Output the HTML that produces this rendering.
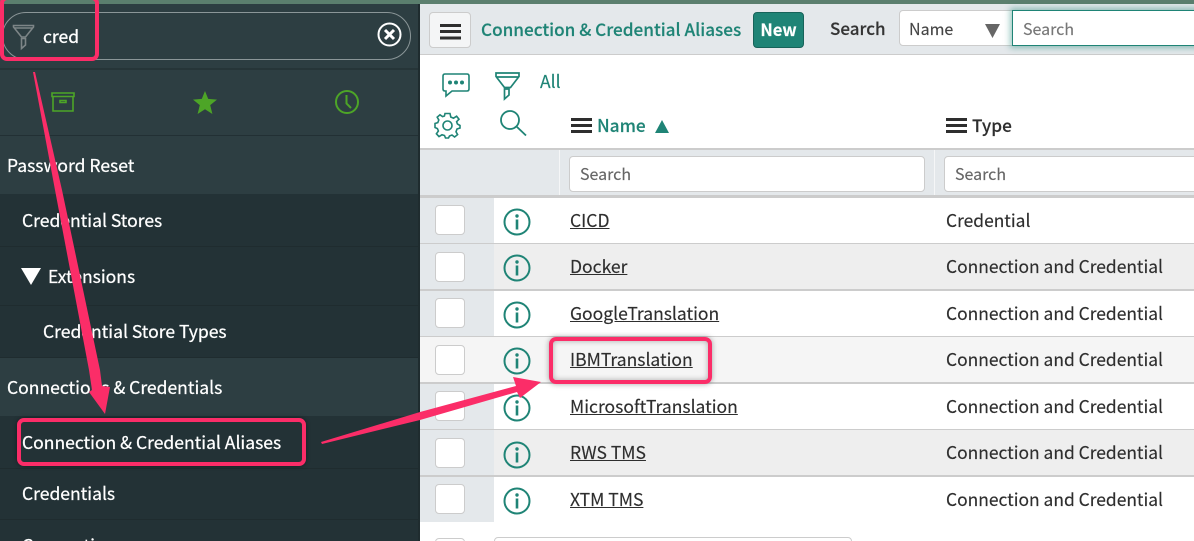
<!DOCTYPE html>
<html><head><meta charset="utf-8">
<style>
html,body{margin:0;padding:0;background:#fff}
#p{position:relative;width:1194px;height:541px;overflow:hidden;background:#fff;font-family:"Noto Sans CJK SC","Liberation Sans",sans-serif;font-size:17.5px;color:#2e2e2e;-webkit-text-stroke:.15px currentColor}
#p div,#p span.a,#p a{position:absolute;white-space:nowrap}
.b{left:0;width:420px}
.s{color:#fff;line-height:26px;height:26px;-webkit-text-stroke:.25px #fff}
.r{left:494px;width:700px;height:46px}
.l{left:420px;width:74px;background:#e4e8eb}
.cb{left:435px;width:30px;height:30px;background:#fff;border:1px solid #ccc;border-radius:4px;box-sizing:border-box}
.n{left:570px;line-height:26px;height:26px;color:#2e2e2e;text-decoration:underline}
.t{left:946px;line-height:26px;height:26px;color:#2e2e2e;font-size:17.4px}
.in{background:#fff;border:1px solid #ccc;border-radius:4px;box-sizing:border-box;height:36px;color:#666;line-height:32px;padding-left:10px;font-size:16px}
svg{position:absolute;overflow:visible}
</style></head><body><div id="p">
<div style="left:0;top:0;width:1194px;height:4px;background:#5b7f6e"></div>

<!-- sidebar -->
<div style="left:0;top:4px;width:420px;height:537px;background:#2d3e42"></div>
<div class="b" style="top:68px;height:2px;background:#263538"></div>
<div class="b" style="top:135px;height:1px;background:#223034"></div>
<div class="b" style="top:194px;height:164px;background:#233236"></div>
<div class="b" style="top:246px;height:1px;background:#1f2c2f"></div>
<div class="b" style="top:305px;height:1px;background:#1f2c2f"></div>
<div class="b" style="top:357px;height:1px;background:#1f2c2f"></div>
<div class="b" style="top:416px;height:125px;background:#233236"></div>
<div class="b" style="top:468px;height:1px;background:#1f2c2f"></div>
<div class="b" style="top:519px;height:1px;background:#1f2c2f"></div>
<div style="left:418px;top:4px;width:2px;height:537px;background:#1f2c2f"></div>

<div style="left:2px;top:12px;width:409px;height:48px;border:1px solid #8b9698;border-radius:24px;box-sizing:border-box"></div>
<svg style="left:12px;top:24px" width="24" height="26" viewBox="0 0 24 26" fill="none" stroke="#7d8587" stroke-width="1.6"><path d="M1.5 1.5H21.5V3L13.5 13H9.5L1.5 3Z M2 4H21"/><path d="M9.5 14.5H13.5V21L9.5 24.5Z"/></svg>
<div class="s" style="left:43px;top:24px;font-size:17.5px;-webkit-text-stroke:.35px #fff">cred</div>
<svg style="left:377px;top:22px" width="25" height="25" viewBox="0 0 25 25" fill="none" stroke="#fff"><circle cx="12.5" cy="12.5" r="11" stroke-width="2"/><path d="M8 8L17 17M17 8L8 17" stroke-width="3"/></svg>

<svg style="left:51px;top:92px" width="24" height="20" viewBox="0 0 24 20" fill="none" stroke="#4da527" stroke-width="1.6"><path d="M1 1H23V4.5H1Z M2 4.5V19H22V4.5 M9 8.5H15V10.5H9Z"/></svg>
<svg style="left:193px;top:91px" width="24" height="23" viewBox="0 0 24 23" fill="#4da527"><path d="M12 0L15.2 7.9L24 8.6L17.2 14.1L19.4 23L12 18.2L4.6 23L6.8 14.1L0 8.6L8.8 7.9Z"/></svg>
<svg style="left:335px;top:90px" width="25" height="24" viewBox="0 0 25 24" fill="none" stroke="#4da527" stroke-width="2"><circle cx="12" cy="12" r="11"/><path d="M11.5 5V13.5L16 18"/></svg>

<div class="s" style="left:7px;top:153px">Password Reset</div>
<div class="s" style="left:22px;top:208px">Credential Stores</div>
<svg style="left:21px;top:268px" width="20" height="17"><path d="M0 0H20L10 17Z" fill="#fff"/></svg>
<div class="s" style="left:48px;top:264px">Extensions</div>
<div class="s" style="left:43px;top:319px">Credential Store Types</div>
<div class="s" style="left:7px;top:375px">Connections &amp; Credentials</div>
<div class="s" style="left:22px;top:430px">Connection &amp; Credential Aliases</div>
<div class="s" style="left:22px;top:481px">Credentials</div>
<div class="s" style="left:22px;top:533px">Connections</div>

<!-- topbar -->
<div style="left:420px;top:4px;width:774px;height:50px;background:#e4e8eb"></div>
<div style="left:420px;top:54px;width:774px;height:1px;background:#ccc"></div>
<div style="left:429px;top:12px;width:42px;height:36px;background:#f4f5f6;border:1px solid #ccc;border-radius:4px;box-sizing:border-box"></div>
<svg style="left:440px;top:24px" width="21" height="16"><path d="M0 1.5H21M0 7.5H21M0 14H21" stroke="#2e2e2e" stroke-width="3"/></svg>
<div style="left:481px;top:17px;line-height:24px;height:24px;color:#1f8476;font-weight:500;font-size:17.15px">Connection &amp; Credential Aliases</div>
<div style="left:753px;top:12px;width:51px;height:36px;background:#1f8476;border:1px solid #17635a;border-radius:4px;box-sizing:border-box;color:#fff;font-weight:700;text-align:center;line-height:33px;font-size:16.6px">New</div>
<div style="left:830px;top:16px;line-height:24px;height:24px;color:#343434;font-weight:500;font-size:17px">Search</div>
<div style="left:899px;top:10px;width:125px;height:36px;background:#fff;border:1px solid #ccc;border-radius:4px;box-sizing:border-box;color:#444;line-height:34px;padding-left:9px;font-size:16px">Name</div>
<svg style="left:985px;top:24px" width="15" height="14"><path d="M0 0H15L7.5 14Z" fill="#666"/></svg>
<div style="left:1012px;top:10px;width:190px;height:36px;background:#fff;border:1px solid #1f8476;box-sizing:border-box;box-shadow:0 0 6px 2px rgba(31,132,118,.45);color:#777;line-height:34px;padding-left:10px;font-size:16px">Search</div>

<!-- list tools -->
<svg style="left:442px;top:73px" width="28" height="25" viewBox="0 0 28 25" fill="none" stroke="#1f8476" stroke-width="1.6"><path d="M3 1H25Q27 1 27 3V16Q27 18 25 18H10L4 23V18H3Q1 18 1 16V3Q1 1 3 1Z"/><g fill="#1f8476" stroke="none"><circle cx="8" cy="9.5" r="2"/><circle cx="14" cy="9.5" r="2"/><circle cx="20" cy="9.5" r="2"/></g></svg>
<svg style="left:495px;top:72px" width="25" height="28" viewBox="0 0 25 28" fill="none" stroke="#1f8476" stroke-width="1.7"><path d="M1 1H24V4.5L15.5 15.5H9.5L1 4.5Z M1.5 5H23.5"/><path d="M9.5 17H14V23L9.5 27Z"/></svg>
<div style="left:540px;top:70px;line-height:24px;height:24px;color:#1f8476">All</div>
<svg style="left:434px;top:112px" width="27" height="27" viewBox="0 0 27 27" fill="none" stroke="#1f8476" stroke-width="1.6"><circle cx="13.5" cy="13.5" r="4.5"/><path d="M11 1.5H16L16.8 5L19.5 6.2L22.6 4.2L25 7.2L22.6 9.7L23.4 12L26 13.5V16L23 17L22 19.8L23.6 22.6L20.6 25L18 23L15.5 24L14.5 26H11.5L10.5 23.5L8 22.8L5 24.6L2.4 21.8L4.4 19L3.4 16.6L1 15.5V11.5L3.8 10.6L4.8 8L3.2 5.2L6 2.8L8.6 4.6L10.4 4Z"/></svg>
<svg style="left:500px;top:110px" width="27" height="27" viewBox="0 0 27 27" fill="none" stroke="#1f8476" stroke-width="1.8"><circle cx="10" cy="10" r="9"/><path d="M16.5 16.5L26 25.5"/></svg>

<svg style="left:571px;top:118px" width="21" height="15"><path d="M0 1.5H21M0 7.5H21M0 13.5H21" stroke="#2e2e2e" stroke-width="3"/></svg>
<div style="left:597px;top:113px;line-height:24px;height:24px;color:#1f8476;font-weight:500;font-size:17.3px">Name</div>
<svg style="left:655px;top:120px" width="14" height="13"><path d="M0 13H14L7 0Z" fill="#1f8476"/></svg>
<svg style="left:946px;top:118px" width="21" height="15"><path d="M0 1.5H21M0 7.5H21M0 13.5H21" stroke="#2e2e2e" stroke-width="3"/></svg>
<div style="left:972px;top:113px;line-height:24px;height:24px;color:#2e2e2e;font-weight:500;font-size:17.2px">Type</div>

<!-- filter row -->
<div style="left:420px;top:148px;width:774px;height:2px;background:#ccc"></div>
<div style="left:420px;top:150px;width:774px;height:45px;background:#e4e8eb"></div>
<div style="left:559px;top:150px;width:1px;height:45px;background:#f5f6f7"></div>
<div style="left:934px;top:150px;width:1px;height:45px;background:#f5f6f7"></div>
<div class="in" style="left:569px;top:156px;width:356px">Search</div>
<div class="in" style="left:944px;top:156px;width:260px">Search</div>
<div style="left:420px;top:195px;width:774px;height:3px;background:#ccc"></div>

<!-- rows -->
<div class="l" style="top:198px;height:324px"></div>
<div class="r" style="top:244px;height:46px;background:#eee"></div>
<div class="r" style="top:337px;height:46px;background:#f5f5f5"></div>
<div class="l" style="top:337px;height:46px;background:#f5f5f5"></div>
<div class="r" style="top:430px;height:46px;background:#eee"></div>
<div style="left:420px;top:243px;width:774px;height:1px;background:#ccc"></div>
<div style="left:420px;top:289px;width:774px;height:2px;background:#ccc"></div>
<div style="left:420px;top:336px;width:774px;height:1px;background:#ccc"></div>
<div style="left:420px;top:382px;width:774px;height:2px;background:#ccc"></div>
<div style="left:420px;top:429px;width:774px;height:1px;background:#ccc"></div>
<div style="left:420px;top:475px;width:774px;height:2px;background:#ccc"></div>

<div class="cb" style="top:205px"></div>
<div class="cb" style="top:252px"></div>
<div class="cb" style="top:298px"></div>
<div class="cb" style="top:345px"></div>
<div class="cb" style="top:391px"></div>
<div class="cb" style="top:438px"></div>
<div class="cb" style="top:484px"></div>

<svg width="0" height="0"><defs><g id="i"><circle cx="14" cy="14" r="12.5" fill="none" stroke="#1f8476" stroke-width="2"/><circle cx="14" cy="8" r="1.7" fill="#1f8476"/><rect x="12.7" y="11.5" width="2.6" height="10" fill="#1f8476"/></g></defs></svg>
<svg style="left:503px;top:208px" width="28" height="28"><use href="#i"/></svg>
<svg style="left:503px;top:254px" width="28" height="28"><use href="#i"/></svg>
<svg style="left:503px;top:301px" width="28" height="28"><use href="#i"/></svg>
<svg style="left:503px;top:347px" width="28" height="28"><use href="#i"/></svg>
<svg style="left:503px;top:394px" width="28" height="28"><use href="#i"/></svg>
<svg style="left:503px;top:441px" width="28" height="28"><use href="#i"/></svg>
<svg style="left:503px;top:487px" width="28" height="28"><use href="#i"/></svg>

<div class="n" style="top:208px">CICD</div><div class="t" style="top:208px">Credential</div>
<div class="n" style="top:254px">Docker</div><div class="t" style="top:254px">Connection and Credential</div>
<div class="n" style="top:301px">GoogleTranslation</div><div class="t" style="top:301px">Connection and Credential</div>
<div class="n" style="top:347px">IBMTranslation</div><div class="t" style="top:347px">Connection and Credential</div>
<div class="n" style="top:394px">MicrosoftTranslation</div><div class="t" style="top:394px">Connection and Credential</div>
<div class="n" style="top:440px">RWS TMS</div><div class="t" style="top:440px">Connection and Credential</div>
<div class="n" style="top:487px">XTM TMS</div><div class="t" style="top:487px">Connection and Credential</div>

<div style="left:435px;top:538px;width:30px;height:30px;background:#fff;border:1px solid #ccc;border-radius:4px;box-sizing:border-box"></div>
<div style="left:494px;top:537px;width:358px;height:30px;background:#fff;border:1px solid #ccc;border-radius:4px;box-sizing:border-box"></div>

<!-- annotations -->
<div style="left:0;top:-4px;width:99px;height:65px;border:4px solid #fb2d68;border-radius:7px;box-sizing:border-box"></div>
<div style="left:17px;top:418px;width:289px;height:48px;border:4px solid #fb2d68;border-radius:7px;box-sizing:border-box;box-shadow:0 0 5px rgba(0,0,0,.4)"></div>
<div style="left:549px;top:337px;width:163px;height:47px;border:4px solid #fb2d68;border-radius:7px;box-sizing:border-box;box-shadow:0 0 6px rgba(0,0,0,.35),inset 0 0 6px rgba(0,0,0,.3)"></div>
<svg style="left:0;top:0" width="1194" height="541"><g fill="#fb2d68"><path d="M33 72L35 72L62 190L100 370L102 386L110 387L105 414L89 392L92 390L89 370L55 190Z"/><path d="M321 442L420 412L516 386L513 377L541 382L520 398L517 392L420 420L322 444Z"/></g></svg>
</div></body></html>
